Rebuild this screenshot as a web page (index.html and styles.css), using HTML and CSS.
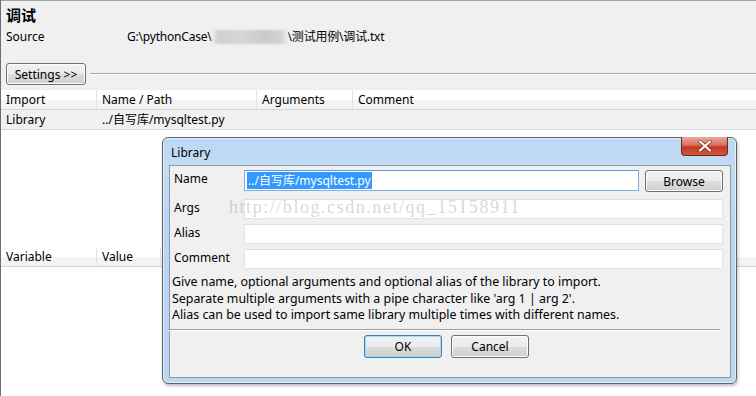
FILE: index.html
```html
<!DOCTYPE html>
<html lang="en">
<head>
    <meta charset="UTF-8">
    <title>调试</title>
    <link rel="stylesheet" href="styles.css">
</head>
<body>
    <main class="page">

        <section class="top">
            <h1 class="title">调试</h1>
            <div class="source">
                <span class="source-label">Source</span>
                <span class="source-path">G:\pythonCase\<span class="blur"></span>\测试用例\调试.txt</span>
            </div>
            <div class="settings">
                <button class="btn settings-btn">Settings &gt;&gt;</button>
                <span class="rule"></span>
            </div>
        </section>

        <!-- imports table -->
        <section class="grid imports">
            <div class="grid-head">
                <span class="cell c1">Import</span>
                <span class="cell c2">Name / Path</span>
                <span class="cell c3">Arguments</span>
                <span class="cell c4">Comment</span>
            </div>
            <div class="grid-row">
                <span class="cell c1">Library</span>
                <span class="cell c2">../自写库/mysqltest.py</span>
            </div>
        </section>

        <!-- variables table -->
        <section class="grid vars">
            <div class="grid-head">
                <span class="cell c1">Variable</span>
                <span class="cell c2">Value</span>
            </div>
        </section>

        <!-- library dialog -->
        <div class="dialog">
            <div class="dialog-bar">
                <span class="dialog-title">Library</span>
                <span class="close-btn">
                    <svg width="16" height="12" viewBox="0 0 16 12">
                        <path d="M3 1.5 L13 10.5 M13 1.5 L3 10.5" stroke="#7a2b20" stroke-width="3.6" stroke-linecap="round"/>
                        <path d="M3 1.5 L13 10.5 M13 1.5 L3 10.5" stroke="#fff" stroke-width="2.2" stroke-linecap="round"/>
                    </svg>
                </span>
            </div>
            <div class="dialog-body">
                <div class="field">
                    <label class="field-label">Name</label>
                    <span class="input input-name focus"><span class="sel">../自写库/mysqltest.py</span></span>
                    <button class="btn browse-btn">Browse</button>
                </div>
                <div class="field">
                    <label class="field-label">Args</label>
                    <span class="input"></span>
                </div>
                <div class="field">
                    <label class="field-label">Alias</label>
                    <span class="input"></span>
                </div>
                <div class="field">
                    <label class="field-label">Comment</label>
                    <span class="input"></span>
                </div>
                <p class="help">
                    Give name, optional arguments and optional alias of the library to import.<br>
                    Separate multiple arguments with a pipe character like 'arg 1 | arg 2'.<br>
                    Alias can be used to import same library multiple times with different names.
                </p>
                <div class="actions">
                    <button class="btn ok-btn">OK</button>
                    <button class="btn">Cancel</button>
                </div>
                <span class="watermark">http://blog.csdn.net/qq_15158911</span>
            </div>
        </div>

    </main>
</body>
</html>
```

FILE: styles.css
```css
html, body {
    margin: 0;
    padding: 0;
}

body {
    font-family: "Noto Sans", "Noto Sans CJK SC", sans-serif;
    font-size: 12px;
    color: #000;
    background-color: #fff;
}

.page {
    position: relative;
    height: 396px;
    border-left: 1px solid #6d6d6d;
    overflow: hidden;
}

/* top panel */

.top {
    height: 89px;
    background-color: #f0f0f0;
    border-top: 1px solid #a0a0a0;
}

.title {
    margin: 0;
    padding: 4px 0 0 5px;
    height: 22px;
    font-size: 15px;
    font-weight: 700;
    font-family: "Noto Sans CJK SC", sans-serif;
    line-height: 20px;
}

.source {
    display: flex;
    padding: 2px 0 0 5px;
    height: 16px;
    line-height: 16px;
}

.source-label {
    width: 121px;
}

.source-path {
    display: flex;
    align-items: center;
    letter-spacing: -0.2px;
}

.blur {
    display: inline-block;
    width: 76px;
    height: 14px;
    background: linear-gradient(90deg, #f0f0f0 0%, #cfcfcf 8%, #d6d6d6 40%, #cacaca 70%, #d4d4d4 92%, #f0f0f0 100%);
    filter: blur(1px);
}

.settings {
    display: flex;
    align-items: center;
    padding: 18px 0 0 5px;
}

.rule {
    flex: 1;
    height: 1px;
    margin-left: 4px;
    background-color: #a8a8a8;
    border-bottom: 1px solid #fff;
}

.btn {
    font-family: inherit;
    font-size: 12px;
    color: #000;
    height: 23px;
    padding: 0;
    border: 1px solid #707070;
    border-radius: 3px;
    background: linear-gradient(#f2f2f2 0%, #ebebeb 50%, #dddddd 51%, #cfcfcf 100%);
    box-shadow: inset 0 0 0 1px #fcfcfc;
}

.settings-btn {
    width: 80px;
    height: 22px;
}

/* tables */

.grid-head {
    display: flex;
    height: 19px;
    line-height: 19px;
    background: linear-gradient(#ffffff 0%, #ffffff 50%, #f3f4f6 51%, #f2f2f3 100%);
    border-bottom: 1px solid #d5d5d5;
}

.grid-row {
    display: flex;
    height: 19px;
    line-height: 19px;
    background-color: #f0f0f0;
    border-bottom: 1px solid #dcdcdc;
}

.cell {
    padding-left: 5px;
    box-sizing: border-box;
}

.grid-head .cell {
    border-right: 1px solid #e3e3e3;
}

.c1 { width: 96px; }
.c2 { width: 160px; }
.c3 { width: 96px; }
.c4 { flex: 1; border-right: none !important; }

.imports {
    height: 157px;
}

.vars .c2 {
    width: 64px;
}

/* dialog */

.dialog {
    position: absolute;
    left: 161px;
    top: 137px;
    width: 575px;
    height: 247px;
    box-sizing: border-box;
    border: 1px solid #5a6470;
    border-radius: 6px;
    background: linear-gradient(#bcd7f3 0%, #c3dcf5 12%, #b8d4f1 40%, #bcd7f2 100%);
    box-shadow: 0 0 0 1px rgba(255, 255, 255, 0.6) inset, 1px 2px 3px rgba(0, 0, 0, 0.25);
    padding: 0 5px 5px 6px;
}

.dialog-bar {
    position: relative;
    height: 27px;
}

.dialog-title {
    position: absolute;
    left: 2px;
    top: 6px;
    font-size: 12px;
}

.close-btn {
    position: absolute;
    right: 3px;
    top: -1px;
    width: 47px;
    height: 19px;
    display: flex;
    align-items: center;
    justify-content: center;
    box-sizing: border-box;
    border: 1px solid #6b2a22;
    border-top: none;
    border-radius: 0 0 4px 4px;
    background: linear-gradient(#e9a99c 0%, #d9705c 45%, #c23c22 55%, #d2573a 100%);
}

.dialog-body {
    position: relative;
    height: 213px;
    box-sizing: border-box;
    border: 1px solid #8d9aa8;
    background-color: #f0f0f0;
    padding: 4px 7px 0 4px;
}

.field {
    display: flex;
    align-items: flex-start;
    margin-bottom: 5px;
}

.field-label {
    width: 70px;
    padding-top: 1px;
    line-height: 16px;
}

.input {
    flex: 1;
    height: 20px;
    box-sizing: border-box;
    background-color: #fff;
    border: 1px solid #e2e3ea;
    border-top-color: #dbdfe6;
}

.input-name {
    flex: none;
    width: 395px;
    height: 21px;
    padding: 1px 0 0 2px;
}

.focus {
    border-color: #7fb1e0;
    border-top-color: #569de5;
}

.sel {
    display: inline-block;
    height: 17px;
    line-height: 17px;
    padding: 0 1px;
    background-color: #3399ff;
    color: #fff;
}

.browse-btn {
    width: 78px;
    height: 22px;
    margin-left: 6px;
}

.field:first-child {
    margin-bottom: 7px;
}

.help {
    margin: 3px 0 0 -2px;
    font-size: 12.4px;
    line-height: 16.5px;
}

.actions {
    display: flex;
    gap: 9px;
    margin: 5px 3px 0 -6px;
    padding: 5px 0 0 196px;
    border-top: 1px solid #a0a0a0;
    box-shadow: inset 0 1px 0 #fff;
}

.actions .btn {
    width: 78px;
}

.ok-btn {
    border-color: #3c7fb1;
    box-shadow: inset 0 0 0 1px #a6dcf6;
}

.watermark {
    position: absolute;
    left: 59px;
    top: 31px;
    font-family: "Liberation Serif", serif;
    font-size: 18px;
    letter-spacing: 1.55px;
    color: rgba(150, 150, 150, 0.38);
    pointer-events: none;
}
```
